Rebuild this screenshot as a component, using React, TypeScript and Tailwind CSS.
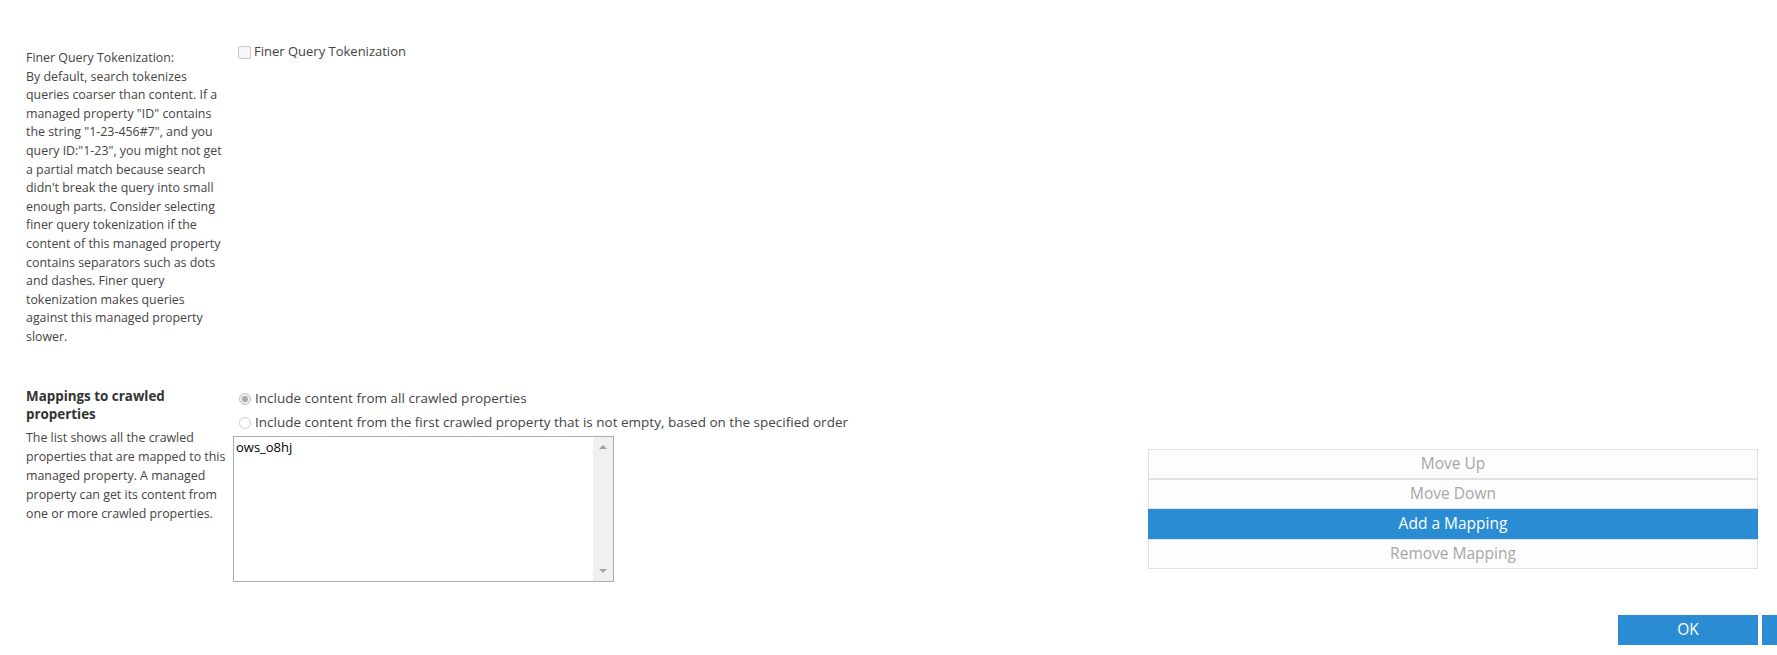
export default function App() {
  const finerText = `Finer Query Tokenization:
By default, search tokenizes
queries coarser than content. If a
managed property "ID" contains
the string "1-23-456#7", and you
query ID:"1-23", you might not get
a partial match because search
didn't break the query into small
enough parts. Consider selecting
finer query tokenization if the
content of this managed property
contains separators such as dots
and dashes. Finer query
tokenization makes queries
against this managed property
slower.`;

  const mappingText = `The list shows all the crawled
properties that are mapped to this
managed property. A managed
property can get its content from
one or more crawled properties.`;

  return (
    <div className="min-h-screen bg-white overflow-hidden font-['Segoe_UI','Open_Sans',sans-serif] text-[#444]">
      <div className="pl-[26px] pr-[19px] pt-[43px]">
        {/* Finer query tokenization */}
        <div className="flex">
          <div className="w-[207px] shrink-0 pt-[6px] text-[12.4px] leading-[18.6px] whitespace-pre-line">
            {finerText}
          </div>
          <div>
            <label className="flex items-center h-[18px] ml-[5px] text-[13px]">
              <span className="w-[13px] h-[13px] rounded-[2px] border border-[#c9c9c9] bg-[#f7f7f7]"></span>
              <span className="ml-[3px]">Finer Query Tokenization</span>
            </label>
          </div>
        </div>

        {/* Mappings to crawled properties */}
        <div className="mt-[40px] flex">
          <div className="w-[207px] shrink-0">
            <h3 className="text-[13.4px] font-bold leading-[18px] text-[#333] whitespace-pre-line">
              {"Mappings to crawled\nproperties"}
            </h3>
            <p className="mt-[5px] text-[12.4px] leading-[19px] whitespace-pre-line">
              {mappingText}
            </p>
          </div>

          <div className="flex-1 flex">
            <div>
              <label className="flex items-center h-[24px] ml-[6px] text-[13.5px]">
                <span className="w-[12px] h-[12px] rounded-full border border-[#c2c2c2] bg-[#ececec] flex items-center justify-center">
                  <span className="w-[6px] h-[6px] rounded-full bg-[#a8a8a8]"></span>
                </span>
                <span className="ml-[4px]">Include content from all crawled properties</span>
              </label>
              <label className="flex items-center h-[24px] ml-[6px] text-[13.5px]">
                <span className="w-[12px] h-[12px] rounded-full border border-[#cfcfcf] bg-white"></span>
                <span className="ml-[4px]">
                  Include content from the first crawled property that is not empty, based on the specified order
                </span>
              </label>

              <div className="mt-[1px] w-[381px] h-[146px] border border-[#abadb3] flex">
                <div className="flex-1 pl-[2px] pt-[2px] text-[13px] leading-[16px] text-black">ows_o8hj</div>
                <div className="w-[20px] bg-[#f0f0f0] flex flex-col justify-between items-center py-[8px]">
                  <span className="w-0 h-0 border-l-[4px] border-r-[4px] border-b-[4px] border-l-transparent border-r-transparent border-b-[#a3a3a3]"></span>
                  <span className="w-0 h-0 border-l-[4px] border-r-[4px] border-t-[4px] border-l-transparent border-r-transparent border-t-[#a3a3a3]"></span>
                </div>
              </div>
            </div>

            <div className="ml-auto mt-[62px] w-[610px] flex flex-col text-[15.5px]">
              <button className="h-[30px] border border-[#e1e1e1] bg-[#fdfdfd] text-[#a6a6a6]">Move Up</button>
              <button className="h-[30px] border border-[#e1e1e1] bg-[#fdfdfd] text-[#a6a6a6]">Move Down</button>
              <button className="h-[30px] border border-[#2a8dd4] bg-[#2a8dd4] text-white">Add a Mapping</button>
              <button className="h-[30px] border border-[#e1e1e1] bg-[#fdfdfd] text-[#a6a6a6]">Remove Mapping</button>
            </div>
          </div>
        </div>

        {/* Footer buttons */}
        <div className="mt-[33px] -mr-[144px] flex justify-end gap-[4px] text-[15.5px]">
          <button className="w-[140px] h-[30px] bg-[#2a8dd4] text-white">OK</button>
          <button aria-label="Cancel" className="w-[140px] h-[30px] bg-[#2a8dd4] text-white"></button>
        </div>
      </div>
    </div>
  );
}
